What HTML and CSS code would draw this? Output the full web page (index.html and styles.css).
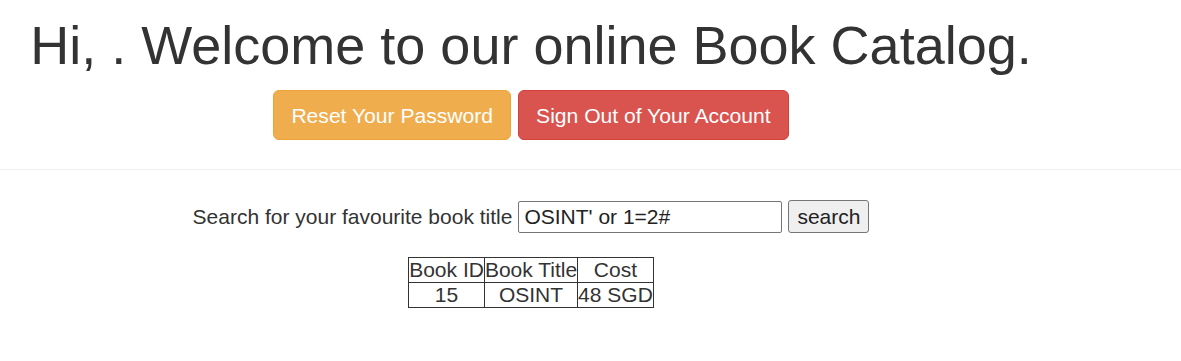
FILE: index.html
```html
<!DOCTYPE html>
<html lang="en">
<head>
    <meta charset="UTF-8">
    <title>Book Catalog</title>
    <link rel="stylesheet" href="styles.css">
</head>
<body>
    <div class="page-header">
        <div class="wrapper">
            <h1>Hi, <b></b>. Welcome to our online Book Catalog.</h1>
            <p class="actions">
                <a href="#" class="btn btn-warning">Reset Your Password</a>
                <a href="#" class="btn btn-danger">Sign Out of Your Account</a>
            </p>
        </div>
    </div>
    <div class="wrapper">
        <form class="search">
            <label for="title">Search for your favourite book title</label>
            <input type="text" id="title" name="title" value="OSINT' or 1=2#">
            <button type="submit">search</button>
        </form>
        <table class="books">
            <tr>
                <td>Book ID</td>
                <td>Book Title</td>
                <td>Cost</td>
            </tr>
            <tr>
                <td>15</td>
                <td>OSINT</td>
                <td>48 SGD</td>
            </tr>
        </table>
    </div>
</body>
</html>
```
FILE: styles.css
```css
body {
    margin: 0;
    font-family: 'Liberation Sans', Arial, sans-serif;
    font-size: 21px;
    color: #333;
    background: #fff;
}
.wrapper {
    width: 1062px;
    text-align: center;
}
.page-header {
    border-bottom: 1px solid #eee;
    padding-bottom: 29px;
}
h1 {
    margin: 16px 0 15px;
    font-size: 54px;
    font-weight: 500;
    line-height: 1.1;
}
.actions {
    margin: 0;
    display: flex;
    justify-content: center;
    gap: 7px;
}
.btn {
    display: inline-block;
    box-sizing: border-box;
    height: 50px;
    line-height: 50px;
    padding: 0 17px;
    font-size: 21.1px;
    color: #fff;
    text-decoration: none;
    border: 1px solid transparent;
    border-radius: 6px;
}
.btn-warning {
    background: #f0ad4e;
    border-color: #eea236;
}
.btn-danger {
    background: #d9534f;
    border-color: #d43f3a;
}
.search {
    margin-top: 30px;
    display: flex;
    justify-content: center;
    align-items: center;
    gap: 6px;
}
.search input {
    box-sizing: border-box;
    width: 264px;
    height: 32px;
    padding: 1px 5px;
    font-family: inherit;
    font-size: 21px;
    color: #222;
    border: 1px solid #767676;
    border-radius: 2px;
}
.search button {
    box-sizing: border-box;
    height: 33px;
    padding: 1px 8px;
    font-family: inherit;
    font-size: 21px;
    color: #222;
    background: #efefef;
    border: 1px solid #767676;
    border-radius: 3px;
}
.books {
    margin: 24px auto 0;
    border-collapse: collapse;
    border: 1px solid #333;
}
.books td {
    border: 1px solid #333;
    padding: 0;
    line-height: 24px;
    text-align: center;
}
```
